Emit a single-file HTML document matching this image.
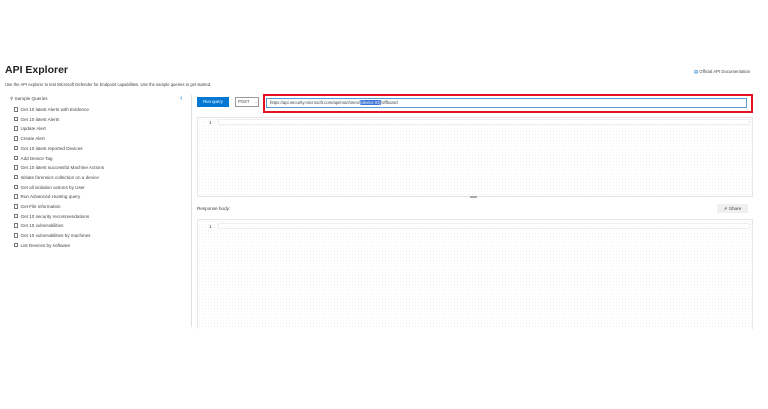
<!DOCTYPE html>
<html><head><style>
*{margin:0;padding:0;box-sizing:border-box}
body{width:768px;height:409px;background:#fff;font-family:"Liberation Sans",sans-serif;color:#323130;position:relative;overflow:hidden}
.a{position:absolute}
.t{font-size:4.6px;white-space:nowrap;color:#444}
.ed{background-color:#fff;background-image:radial-gradient(#eeeeee 0.5px,transparent 0.6px);background-size:3px 3px;border:1px solid #e6e6e6}
.doc{display:inline-block;width:3.5px;height:4.5px;border:0.6px solid #777;margin-right:3px;vertical-align:-0.5px}
</style></head><body>
<div class="a" style="left:5px;top:64px;font-size:10.5px;font-weight:bold;color:#222">API Explorer</div>
<div class="a t" style="left:5px;top:82px;font-size:4.2px">Use the API explorer to test Microsoft Defender for Endpoint capabilities. Use the sample queries to get started.</div>
<div class="a t" style="left:694px;top:69px;font-size:4.3px"><span style="color:#0078d4">▤</span> Official API Documentation</div>
<div class="a t" style="left:10px;top:96px">⚲ Sample Queries</div>
<div class="a" style="left:180px;top:95px;font-size:7px;color:#0078d4">‹</div>
<div class="a" style="left:14px;top:105px;line-height:9.7px">
<div class="t"><span class="doc"></span>Get 10 latest Alerts with Evidence</div>
<div class="t"><span class="doc"></span>Get 10 latest Alerts</div>
<div class="t"><span class="doc"></span>Update Alert</div>
<div class="t"><span class="doc"></span>Create Alert</div>
<div class="t"><span class="doc"></span>Get 10 latest reported Devices</div>
<div class="t"><span class="doc"></span>Add Device Tag</div>
<div class="t"><span class="doc"></span>Get 10 latest successful Machine Actions</div>
<div class="t"><span class="doc"></span>Initiate forensics collection on a device</div>
<div class="t"><span class="doc"></span>Get all isolation actions by User</div>
<div class="t"><span class="doc"></span>Run Advanced Hunting query</div>
<div class="t"><span class="doc"></span>Get File information</div>
<div class="t"><span class="doc"></span>Get 10 security recommendations</div>
<div class="t"><span class="doc"></span>Get 10 vulnerabilities</div>
<div class="t"><span class="doc"></span>Get 10 vulnerabilities by machines</div>
<div class="t"><span class="doc"></span>List Devices by software</div>
</div>
<div class="a" style="left:191px;top:95px;width:1px;height:232px;background:#e1e1e1"></div>
<div class="a" style="left:197px;top:97px;width:32px;height:10px;background:#0078d4;color:#fff;font-size:4.3px;text-align:center;line-height:10px">Run query</div>
<div class="a t" style="left:235px;top:97px;width:24px;height:10px;border:1px solid #999;line-height:8px;padding-left:2px;font-size:4.2px">POST <span style="color:#888;margin-left:4px">⌄</span></div>
<div class="a" style="left:263px;top:94px;width:490px;height:19px;border:2px solid #e81123"></div>
<div class="a t" style="left:266px;top:98px;width:481px;height:10px;border:1px solid #5b9bd5;line-height:8px;padding-left:3px;font-size:4.3px">https://api.security.microsoft.com/api/machines/<span style="background:#3a74d6;color:#fff">{device ID}</span>/offboard</div>
<div class="a ed" style="left:197px;top:117px;width:556px;height:80px"></div>
<div class="a t" style="left:209px;top:120px">1</div>
<div class="a" style="left:218px;top:119px;width:532px;height:6px;border:1px solid #eee;background:#fff"></div>
<div class="a" style="left:470px;top:196px;width:7px;height:2px;background:#aaa"></div>
<div class="a t" style="left:197px;top:206px">Response body:</div>
<div class="a t" style="left:717px;top:204px;width:31px;height:9px;background:#f0f0f0;line-height:9px;text-align:center">⇗ Share</div>
<div class="a ed" style="left:197px;top:219px;width:556px;height:110px;border-bottom:none"></div>
<div class="a t" style="left:209px;top:224px">1</div>
<div class="a" style="left:218px;top:223px;width:532px;height:6px;border:1px solid #eee;background:#fff"></div>
</body></html>
